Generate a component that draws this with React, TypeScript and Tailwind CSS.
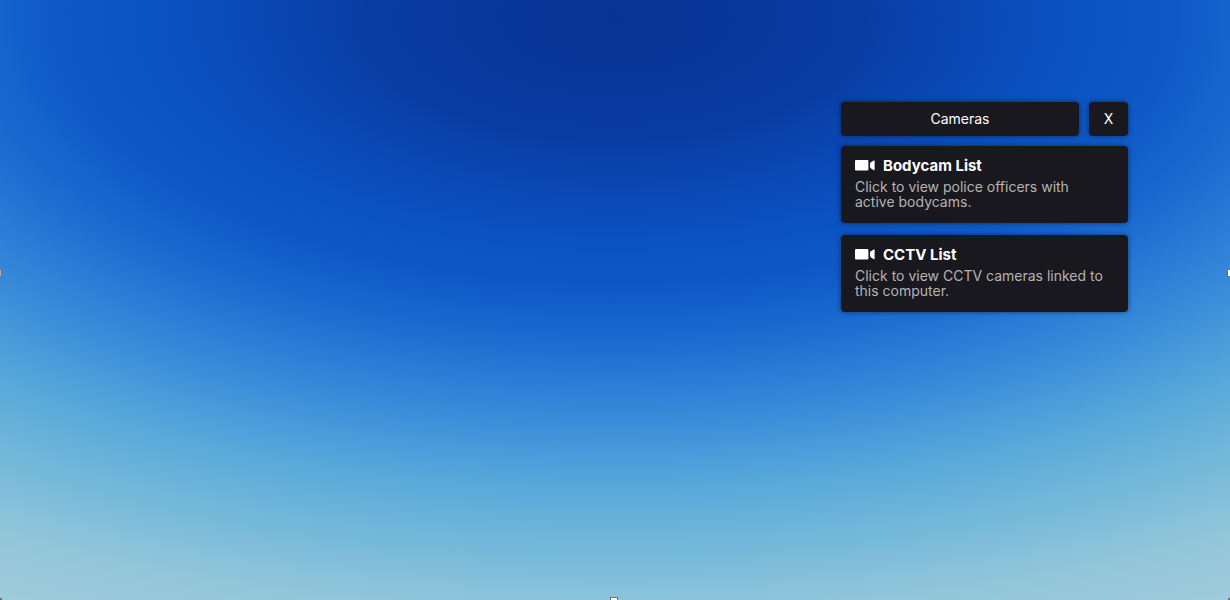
import React from 'react';

const cards = [
  {
    title: 'Bodycam List',
    description: 'Click to view police officers with active bodycams.',
  },
  {
    title: 'CCTV List',
    description: 'Click to view CCTV cameras linked to this computer.',
  },
];

function CameraIcon() {
  return (
    <svg viewBox="0 0 20 12" className="w-5 h-3 shrink-0 fill-white" aria-hidden="true">
      <rect x="0" y="0" width="13.4" height="10.6" rx="1" />
      <path d="M19.6 1v8.6q0 1-.8.6l-2.9-1.9q-.9-.6-.9-1.5V3.8q0-.9.9-1.5l2.9-1.9q.8-.4.8.6z" />
    </svg>
  );
}

export default function App() {
  return (
    <main className="relative min-h-screen overflow-hidden bg-[radial-gradient(ellipse_112%_112%_at_50%_3%,#0a3494_0%,#093699_8%,#093ca3_18%,#0a47b3_25%,#0b51c0_33%,#0f5ac7_41%,#1868cf_47%,#2878d6_53%,#3a8cd9_60%,#4c9eda_66%,#5cabda_71%,#73b8d9_79%,#84bfda_84%,#93c6da_89%,#a0cbda_98%)] font-['Inter',sans-serif]">
      {/* Camera menu */}
      <div className="flex justify-end pt-[102px] pr-[102px]">
        <div className="w-[287px]">
          <div className="flex gap-2.5 mb-2.5">
            <h1 className="flex-1 h-[34px] flex items-center justify-center rounded bg-[#19181e] text-white text-sm shadow-[0_0_5px_rgba(0,0,0,0.5)]">
              Cameras
            </h1>
            <button
              type="button"
              aria-label="Close"
              className="w-[39px] h-[34px] rounded bg-[#19181e] text-white text-sm shadow-[0_0_5px_rgba(0,0,0,0.5)]"
            >
              X
            </button>
          </div>

          <div className="flex flex-col gap-3">
            {cards.map((card) => (
              <button
                key={card.title}
                type="button"
                className="flex flex-col w-full min-h-[77px] px-3.5 py-3 rounded bg-[#19181e] text-left shadow-[0_0_5px_rgba(0,0,0,0.5)]"
              >
                <span className="flex items-center gap-2 text-[15px] leading-4 font-bold text-white">
                  <CameraIcon />
                  {card.title}
                </span>
                <span className="block max-w-[252px] mt-[5px] text-sm leading-[15px] text-[#b4b4b6]">
                  {card.description}
                </span>
              </button>
            ))}
          </div>
        </div>
      </div>

      {/* Resize handles */}
      <span className="absolute left-0 top-[269px] w-0.5 h-2 bg-[#b8aea4] border-r border-y border-[#707070]" />
      <span className="absolute right-0 top-[269px] w-[3px] h-2 bg-white border-l border-y border-[#707070]" />
      <span className="absolute bottom-0 left-[610px] w-2 h-[3px] bg-white border-t border-x border-[#707070]" />
      <span className="absolute bottom-0 left-0 w-0.5 h-0.5 bg-[#707070]" />
      <span className="absolute bottom-0 right-0 w-0.5 h-0.5 bg-[#707070]" />
    </main>
  );
}
